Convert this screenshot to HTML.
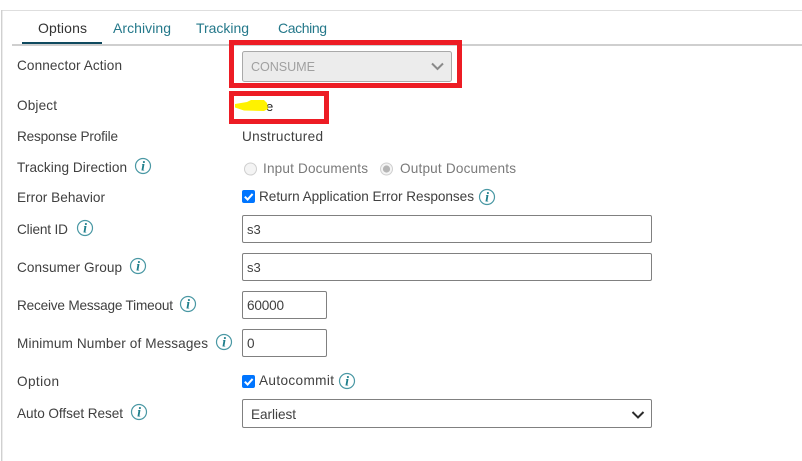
<!DOCTYPE html>
<html lang="en">
<head>
<meta charset="utf-8">
<title>Options</title>
<style>
html,body{margin:0;padding:0;background:#fff;width:802px;height:461px;overflow:hidden}
svg{display:block}
text{font-family:"Liberation Sans",sans-serif;font-size:13.6px;fill:#404040}
.tab{fill:#24788a;font-size:14px}
.info circle{fill:none;stroke:#4a98a4;stroke-width:1.2}
.info text{font-family:"Liberation Serif",serif;font-style:italic;font-weight:bold;font-size:14px;fill:#1f7f8c;text-anchor:middle}
.box{fill:#fff;stroke:#808080;stroke-width:1}
</style>
</head>
<body>
<svg width="802" height="461" viewBox="0 0 802 461" xmlns="http://www.w3.org/2000/svg">
<defs>
<g id="i" class="info"><circle r="7.5"/><text y="4.5">i</text></g>
</defs>
<rect x="1" y="10" width="801" height="1" fill="#dedede"/>
<rect x="1" y="10" width="1.4" height="451" fill="#d0d0d0"/>

<rect x="12" y="44" width="790" height="2" fill="#cfcfcf"/>
<rect x="22" y="42" width="80" height="2" fill="#0f4a5f"/>
<text x="38" y="33" textLength="49" lengthAdjust="spacing" class="tab" style="fill:#333">Options</text>
<text x="113" y="33" textLength="58" lengthAdjust="spacing" class="tab">Archiving</text>
<text x="196" y="33" textLength="53" lengthAdjust="spacing" class="tab">Tracking</text>
<text x="278" y="33" textLength="49" lengthAdjust="spacing" class="tab">Caching</text>

<text x="17" y="70" textLength="105" lengthAdjust="spacing">Connector Action</text>
<text x="17" y="110" textLength="40" lengthAdjust="spacing">Object</text>
<text x="17" y="141" textLength="101" lengthAdjust="spacing">Response Profile</text>
<text x="17" y="172" textLength="110" lengthAdjust="spacing">Tracking Direction</text>
<text x="17" y="202" textLength="88" lengthAdjust="spacing">Error Behavior</text>
<text x="17" y="234" textLength="51" lengthAdjust="spacing">Client ID</text>
<text x="17" y="272" textLength="105" lengthAdjust="spacing">Consumer Group</text>
<text x="17" y="310" textLength="156" lengthAdjust="spacing">Receive Message Timeout</text>
<text x="17" y="348" textLength="191" lengthAdjust="spacing">Minimum Number of Messages</text>
<text x="17" y="386" textLength="42" lengthAdjust="spacing">Option</text>
<text x="17" y="418" textLength="106" lengthAdjust="spacing">Auto Offset Reset</text>

<use href="#i" x="143" y="166"/>
<use href="#i" x="85" y="228"/>
<use href="#i" x="138" y="266"/>
<use href="#i" x="188" y="304"/>
<use href="#i" x="224" y="342"/>
<use href="#i" x="139" y="412"/>
<use href="#i" x="487" y="197"/>
<use href="#i" x="347" y="381"/>

<!-- disabled select -->
<rect x="242.5" y="51.5" width="209" height="30" rx="2" fill="#ececec" stroke="#a9a9a9"/>
<text x="251" y="71" textLength="64" lengthAdjust="spacing" style="fill:#a0a0a0;font-size:12.6px">CONSUME</text>
<path d="M432 63.5l5.5 5.5 5.5-5.5" fill="none" stroke="#8a8a8a" stroke-width="2"/>
<rect x="231.5" y="42.5" width="228" height="43" fill="none" stroke="#ed1c24" stroke-width="5"/>

<!-- object -->
<text x="266" y="111" style="fill:#222;font-size:13px">e</text>
<path d="M235 104l12-2 4-2h13l3 3 1 6-4 2-20-.5-9-3z" fill="#fff200"/>
<rect x="231.5" y="93.5" width="95" height="28" fill="none" stroke="#ed1c24" stroke-width="5"/>

<text x="242" y="141" textLength="81" lengthAdjust="spacing">Unstructured</text>

<!-- radios -->
<circle cx="250.5" cy="169" r="6" fill="#f4f4f4" stroke="#cfcfcf"/>
<text x="263" y="173" textLength="105" lengthAdjust="spacing" style="fill:#7a7a7a">Input Documents</text>
<circle cx="386.5" cy="169" r="6" fill="#f4f4f4" stroke="#cfcfcf"/>
<circle cx="386.5" cy="169" r="3.6" fill="#b5b5b5"/>
<text x="400" y="173" textLength="116" lengthAdjust="spacing" style="fill:#7a7a7a">Output Documents</text>

<!-- checkbox 1 -->
<rect x="242" y="190" width="13" height="13" rx="2" fill="#0075ff"/>
<path d="M244.8 196.7l2.8 2.8 5-5.6" fill="none" stroke="#fff" stroke-width="2"/>
<text x="259" y="201" textLength="215" lengthAdjust="spacing">Return Application Error Responses</text>

<!-- inputs -->
<rect class="box" x="242.5" y="215.5" width="409" height="27" rx="1.5"/>
<text x="247" y="234" style="font-size:13px">s3</text>
<rect class="box" x="242.5" y="253.5" width="409" height="27" rx="1.5"/>
<text x="247" y="272" style="font-size:13px">s3</text>
<rect class="box" x="242.5" y="291.5" width="84" height="27" rx="1.5"/>
<text x="247" y="310" textLength="37" lengthAdjust="spacing">60000</text>
<rect class="box" x="242.5" y="329.5" width="84" height="27" rx="1.5"/>
<text x="247" y="348">0</text>

<!-- checkbox 2 -->
<rect x="242" y="375" width="13" height="13" rx="2" fill="#0075ff"/>
<path d="M244.8 381.7l2.8 2.8 5-5.6" fill="none" stroke="#fff" stroke-width="2"/>
<text x="259" y="385" textLength="75" lengthAdjust="spacing">Autocommit</text>

<!-- select -->
<rect class="box" x="242.5" y="399.5" width="409" height="28" rx="1.5"/>
<text x="251" y="419" textLength="45" lengthAdjust="spacing">Earliest</text>
<path d="M632.5 412l5.5 5.5 5.5-5.5" fill="none" stroke="#2b2b2b" stroke-width="2"/>
</svg>
</body>
</html>
